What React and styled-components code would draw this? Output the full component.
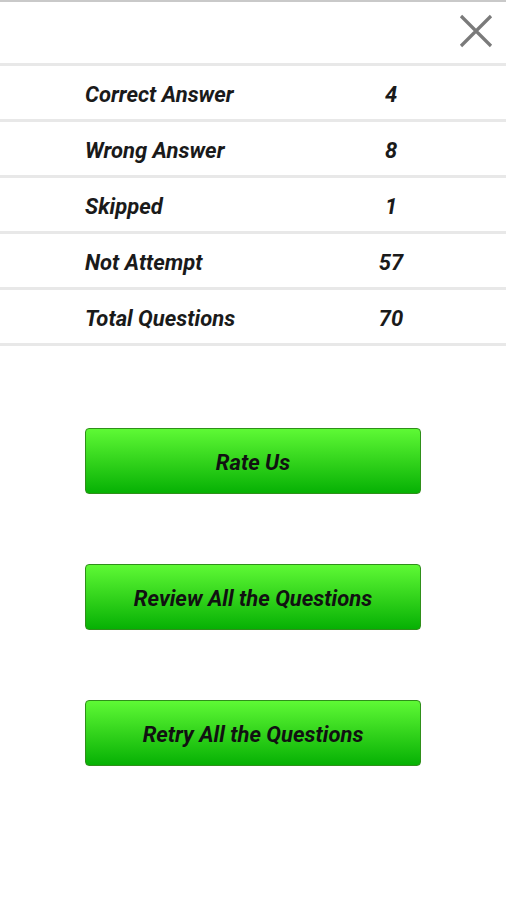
import React from "react";
import styled, { createGlobalStyle } from "styled-components";

const GlobalStyle = createGlobalStyle`
  html, body {
    margin: 0;
    padding: 0;
    background: #ffffff;
    font-family: Roboto, "Liberation Sans", sans-serif;
  }
`;

const stats = [
  { label: "Correct Answer", value: 4 },
  { label: "Wrong Answer", value: 8 },
  { label: "Skipped", value: 1 },
  { label: "Not Attempt", value: 57 },
  { label: "Total Questions", value: 70 },
];

const actions = ["Rate Us", "Review All the Questions", "Retry All the Questions"];

const App = () => {
  return (
    <Page>
      <GlobalStyle />
      <Header>
        <CloseButton aria-label="close">
          <svg width="34" height="34" viewBox="0 0 34 34">
            <path
              d="M2 2 L32 32 M32 2 L2 32"
              stroke="#7a7a7a"
              strokeWidth="3.2"
              fill="none"
            />
          </svg>
        </CloseButton>
      </Header>
      <StatList>
        {stats.map(item => (
          <StatRow key={item.label}>
            <Label>{item.label}</Label>
            <Value>{item.value}</Value>
          </StatRow>
        ))}
      </StatList>
      <Actions>
        {actions.map(text => (
          <GreenButton key={text}>{text}</GreenButton>
        ))}
      </Actions>
    </Page>
  );
};

const Page = styled.div`
  width: 506px;
  height: 900px;
  background: #fff;
  display: flex;
  flex-direction: column;
  border-top: 2px solid #c9c9c9;
  box-sizing: border-box;
`;

const Header = styled.div`
  height: 61px;
  display: flex;
  justify-content: flex-end;
  align-items: center;
  padding-right: 13px;
  border-bottom: 3px solid #e8e8e8;
`;

const CloseButton = styled.div`
  width: 34px;
  height: 34px;
  margin-top: -3px;
`;

const StatList = styled.div`
  display: flex;
  flex-direction: column;
`;

const StatRow = styled.div`
  height: 53px;
  display: grid;
  grid-template-columns: 85px 1fr 80px 75px;
  align-items: center;
  border-bottom: 3px solid #e8e8e8;
  font-size: 22px;
  font-style: italic;
  font-weight: 700;
  color: #1a1a1a;
`;

const Label = styled.span`
  grid-column: 2;
  padding-top: 4px;
`;

const Value = styled.span`
  grid-column: 3;
  text-align: center;
  padding-top: 4px;
`;

const Actions = styled.div`
  display: flex;
  flex-direction: column;
  align-items: center;
  gap: 70px;
  padding-top: 82px;
`;

const GreenButton = styled.div`
  width: 336px;
  height: 66px;
  box-sizing: border-box;
  padding-top: 2px;
  border: 1px solid #2f8f1a;
  border-radius: 4px;
  background: linear-gradient(to bottom, #5ef935 0%, #33d41c 50%, #06b104 100%);
  display: flex;
  align-items: center;
  justify-content: center;
  font-size: 22px;
  font-style: italic;
  font-weight: 700;
  color: #111;
`;

export default App;
